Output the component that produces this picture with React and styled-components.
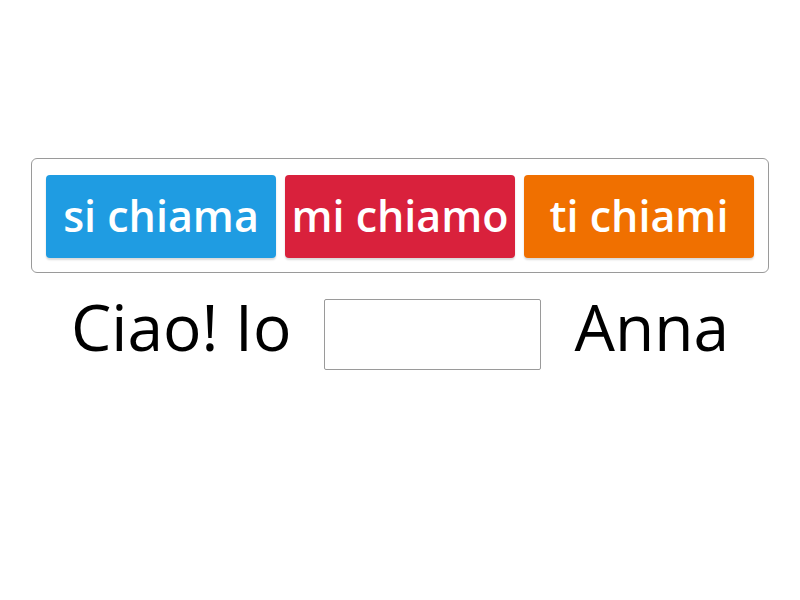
import React from 'react';
import styled, { createGlobalStyle } from 'styled-components';

const GlobalStyle = createGlobalStyle`
  body {
    margin: 0;
    background: #fff;
    font-family: "Open Sans", "Liberation Sans", sans-serif;
  }
`;

const Page = styled.div`
  width: 800px;
  height: 600px;
  padding-top: 158px;
  box-sizing: border-box;
`;

const Bank = styled.div`
  width: 738px;
  margin: 0 auto;
  box-sizing: border-box;
  border: 1px solid #9a9a9a;
  border-radius: 6px;
  padding: 16px 14px 14px;
  display: flex;
  gap: 9px;
`;

const Tile = styled.div`
  width: 230px;
  height: 83px;
  border-radius: 4px;
  background: ${p => p.color};
  box-shadow: 0 2px 2px rgba(0, 0, 0, 0.15);
  color: #fff;
  font-weight: 600;
  font-size: 43px;
  display: flex;
  align-items: center;
  justify-content: center;
  padding-bottom: 2px;
  box-sizing: border-box;
`;

const Sentence = styled.div`
  display: flex;
  align-items: center;
  justify-content: center;
  gap: 33px;
  margin-top: 18px;
`;

const Word = styled.span`
  font-size: 64px;
  line-height: 72px;
  padding-bottom: 14px;
  color: #000;
`;

const Blank = styled.div`
  width: 217px;
  height: 71px;
  box-sizing: border-box;
  border: 1px solid #9a9a9a;
  border-radius: 2px;
`;

const tiles = [
  { text: 'si chiama', color: '#1f9ce2' },
  { text: 'mi chiamo', color: '#d9213c' },
  { text: 'ti chiami', color: '#f07000' },
];

export default function App() {
  return (
    <Page>
      <GlobalStyle />
      <Bank>
        {tiles.map(t => (
          <Tile key={t.text} color={t.color}>{t.text}</Tile>
        ))}
      </Bank>
      <Sentence>
        <Word>Ciao! Io</Word>
        <Blank />
        <Word>Anna</Word>
      </Sentence>
    </Page>
  );
}
